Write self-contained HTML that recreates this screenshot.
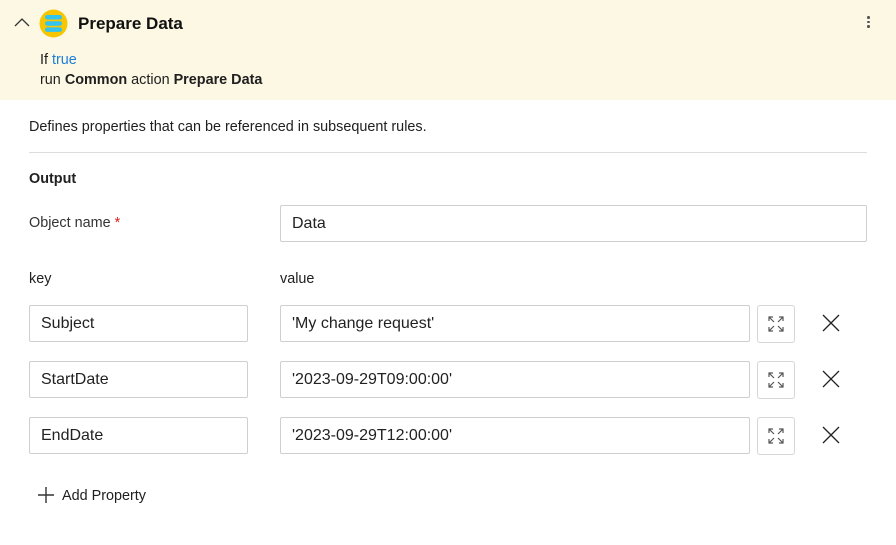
<!DOCTYPE html>
<html><head><style>
*{box-sizing:border-box;margin:0;padding:0}
body{width:896px;height:545px;background:#fff;font-family:"Liberation Sans",sans-serif;color:#202020;position:relative;overflow:hidden;font-size:14.4px}
.hdr{position:absolute;left:0;top:0;width:896px;height:100px;background:#fdf8e4}
.abs{position:absolute}
.inp{position:absolute;height:37px;border:1px solid #cfcfcf;border-radius:2px;padding:0 11px;line-height:35px;font-size:16px;color:#222;background:#fff}
.btn{position:absolute;width:38px;height:38px;border:1px solid #d6d6d6;border-radius:3px;background:#fff}
</style></head><body>
<div class="hdr">
<svg class="abs" style="left:14px;top:17px" width="16" height="12"><path d="M1 9 L8 2 L15 9" fill="none" stroke="#333" stroke-width="1.3"/></svg>
<svg class="abs" style="left:39px;top:9px" width="29" height="29"><circle cx="14.5" cy="14.5" r="14" fill="#f7c600"/><rect x="6" y="6" width="17" height="4.5" rx="2.2" fill="#33c3ef"/><rect x="6" y="12.2" width="17" height="4.5" rx="2.2" fill="#33c3ef"/><rect x="6" y="18.4" width="17" height="4.5" rx="2.2" fill="#33c3ef"/></svg>
<div class="abs" style="left:78px;top:14px;font-size:17px;font-weight:bold;color:#111">Prepare Data</div>
<div class="abs" style="left:867px;top:16px;width:3px;font-size:0"><div style="width:2.5px;height:2.5px;background:#555;border-radius:50%;margin-bottom:2px"></div><div style="width:2.5px;height:2.5px;background:#555;border-radius:50%;margin-bottom:2px"></div><div style="width:2.5px;height:2.5px;background:#555;border-radius:50%"></div></div>
<div class="abs" style="left:40px;top:52px">If <span style="color:#1a7fd8">true</span></div>
<div class="abs" style="left:40px;top:72px">run <b>Common</b> action <b>Prepare Data</b></div>
</div>
<div class="abs" style="left:29px;top:119px">Defines properties that can be referenced in subsequent rules.</div>
<div class="abs" style="left:29px;top:152px;width:838px;height:1px;background:#dcdcdc"></div>
<div class="abs" style="left:29px;top:171px;font-weight:bold">Output</div>
<div class="abs" style="left:29px;top:215px;color:#333">Object name <span style="color:#d22">*</span></div>
<div class="inp" style="left:280px;top:205px;width:587px">Data</div>
<div class="abs" style="left:29px;top:271px">key</div>
<div class="abs" style="left:280px;top:271px">value</div>

<div class="inp" style="left:29px;top:305px;width:219px">Subject</div>
<div class="inp" style="left:280px;top:305px;width:470px">'My change request'</div>
<div class="btn" style="left:757px;top:305px"></div>
<div class="inp" style="left:29px;top:361px;width:219px">StartDate</div>
<div class="inp" style="left:280px;top:361px;width:470px">'2023-09-29T09:00:00'</div>
<div class="btn" style="left:757px;top:361px"></div>
<div class="inp" style="left:29px;top:417px;width:219px">EndDate</div>
<div class="inp" style="left:280px;top:417px;width:470px">'2023-09-29T12:00:00'</div>
<div class="btn" style="left:757px;top:417px"></div>

<svg class="abs" style="left:0;top:0" width="896" height="545">
<defs><g id="ex" fill="none" stroke="#555" stroke-width="1.2"><path d="M1 5V1H5M1 1L6 6M11 1H15V5M15 1L10 6M1 11V15H5M1 15L6 10M15 11V15H11M15 15L10 10"/></g>
<g id="x" stroke="#222" stroke-width="1.3"><path d="M0 0L16 16M16 0L0 16"/></g></defs>
<use href="#ex" x="768" y="316"/><use href="#ex" x="768" y="372"/><use href="#ex" x="768" y="428"/>
<use href="#x" x="823" y="315"/><use href="#x" x="823" y="371"/><use href="#x" x="823" y="427"/>
<path d="M38 495H54M46 487V503" stroke="#333" stroke-width="1.4"/>
</svg>
<div class="abs" style="left:62px;top:488px">Add Property</div>
</body></html>
